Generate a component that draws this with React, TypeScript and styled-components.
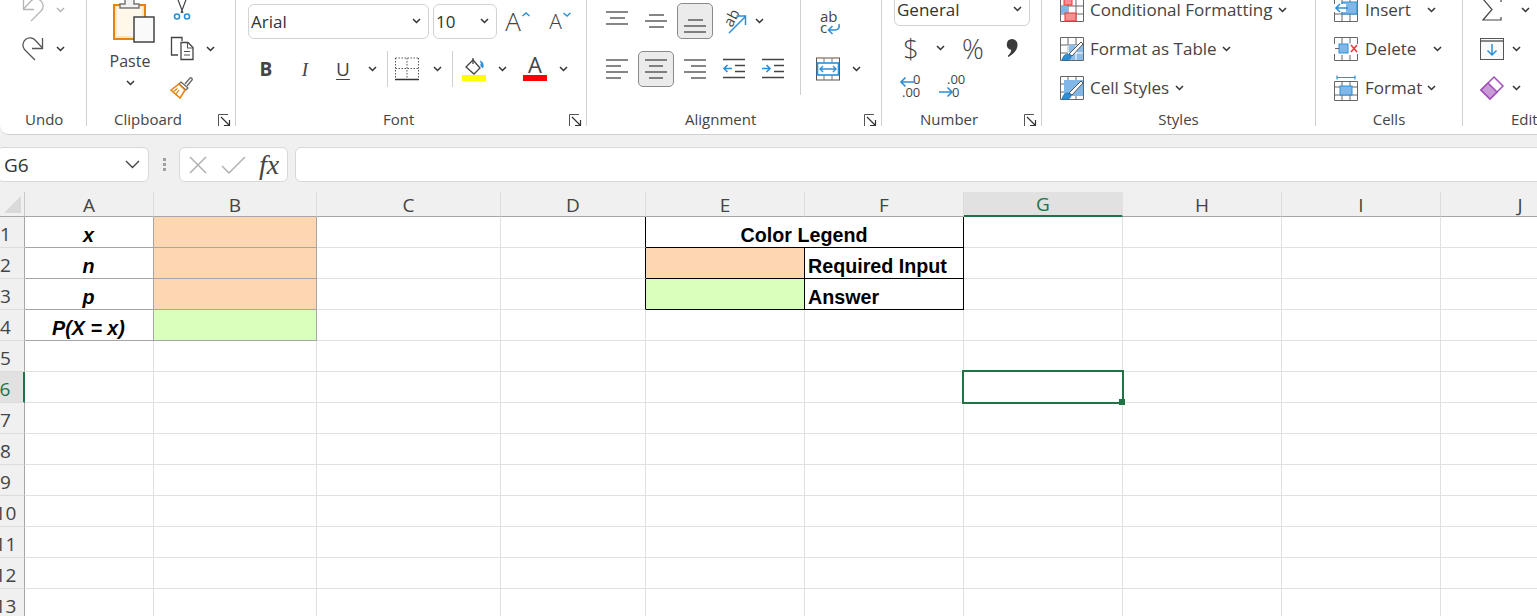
import React from 'react';
import styled, { createGlobalStyle, css } from 'styled-components';

const uiFont = '"Open Sans", "Noto Sans", sans-serif';
const cellFont = '"Liberation Sans", Arial, sans-serif';
const ink = '#444';
const blue = '#2b8fd8';
const excelGreen = '#217346';
const peach = '#fdd6b2';
const lime = '#d9ffbc';

const GlobalStyle = createGlobalStyle`
  html, body { margin: 0; padding: 0; background: #f0f0f0; overflow: hidden; }
  #root { width: 1537px; height: 616px; overflow: hidden; }
  * { box-sizing: border-box; }
`;

const Page = styled.div`
  width: 1537px;
  height: 616px;
  overflow: hidden;
  background: #f0f0f0;
  font-family: ${uiFont};
`;

/* ---------- ribbon ---------- */

const Ribbon = styled.div`
  display: flex;
  height: 135px;
  background: #fff;
  border-bottom: 1px solid #d0d0d0;
  border-bottom-left-radius: 9px;
  overflow: hidden;
`;

const Group = styled.section<{ $w: number; $last?: boolean }>`
  position: relative;
  flex: none;
  display: flex;
  flex-direction: column;
  width: ${(p) => p.$w}px;
  height: 126px;
  border-right: ${(p) => (p.$last ? 'none' : '1px solid #d0d0d0')};
`;

const GroupBody = styled.div<{ $pl?: number }>`
  flex: none;
  display: flex;
  height: 109px;
  padding-left: ${(p) => p.$pl ?? 0}px;
`;

const GroupLabel = styled.div<{ $x?: number }>`
  flex: none;
  height: 21px;
  font-size: 15px;
  line-height: 21px;
  color: #444;
  text-align: center;
  white-space: nowrap;
  ${(p) =>
    p.$x !== undefined &&
    css`
      text-align: left;
      padding-left: ${p.$x}px;
    `}
`;

const Launcher = styled.span`
  position: absolute;
  right: 5px;
  bottom: 0;
  width: 12px;
  height: 12px;
`;

const Stack = styled.div<{ $mt?: number }>`
  display: flex;
  flex-direction: column;
  margin-top: ${(p) => p.$mt ?? -10}px;
`;

const StackRow = styled.div`
  display: flex;
  align-items: center;
  height: 39px;
  flex: none;
`;

const Rows = styled.div<{ $w?: number; $pl?: number }>`
  display: flex;
  flex-direction: column;
  gap: 12px;
  padding: 3px 0 0 ${(p) => p.$pl ?? 0}px;
  ${(p) => p.$w && `width: ${p.$w}px;`}
`;

const ToolRow = styled.div<{ $gap?: number; $mt?: number }>`
  display: flex;
  align-items: center;
  flex: none;
  height: 36px;
  gap: ${(p) => p.$gap ?? 0}px;
  margin-top: ${(p) => p.$mt ?? 0}px;
`;

const Tool = styled.span<{ $w: number; $active?: boolean; $pl?: number; $ml?: number }>`
  flex: none;
  display: flex;
  align-items: center;
  justify-content: center;
  width: ${(p) => p.$w}px;
  height: 36px;
  margin-left: ${(p) => p.$ml ?? 0}px;
  padding-left: ${(p) => p.$pl ?? 0}px;
  color: ${ink};
  border-radius: 5px;
  ${(p) =>
    p.$active &&
    css`
      background: #ebebeb;
      border: 1px solid #8a8a8a;
    `}
`;

const Divider = styled.span<{ $l: number; $r: number }>`
  flex: none;
  width: 1px;
  height: 36px;
  margin: 0 ${(p) => p.$r}px 0 ${(p) => p.$l}px;
  background: #d0d0d0;
`;

const TallDivider = styled.span`
  flex: none;
  width: 1px;
  height: 95px;
  background: #d0d0d0;
`;

const Combo = styled.div<{ $w: number; $h?: number; $ml?: number }>`
  flex: none;
  display: flex;
  align-items: center;
  justify-content: space-between;
  width: ${(p) => p.$w}px;
  height: ${(p) => p.$h ?? 35}px;
  margin-left: ${(p) => p.$ml ?? 0}px;
  padding: 0 7px 0 2px;
  background: #fff;
  border: 1px solid #d2d2d2;
  border-radius: 6px;
  font-size: 17px;
  color: #333;
`;

const Glyph = styled.span<{
  $size: number;
  $weight?: number;
  $italic?: boolean;
  $serif?: boolean;
  $underline?: boolean;
}>`
  font-family: ${(p) => (p.$serif ? '"Liberation Serif", serif' : uiFont)};
  font-size: ${(p) => p.$size}px;
  font-weight: ${(p) => p.$weight ?? 400};
  font-style: ${(p) => (p.$italic ? 'italic' : 'normal')};
  line-height: 1;
  color: ${ink};
  ${(p) =>
    p.$underline &&
    css`
      text-decoration: underline;
      text-underline-offset: 3px;
    `}
`;

const PasteColumn = styled.div`
  flex: none;
  display: flex;
  flex-direction: column;
  align-items: center;
  width: 60px;
`;

const PasteIconSlot = styled.span`
  display: flex;
  margin-left: 7px;
`;

const PasteText = styled.span`
  height: 22px;
  margin-top: 6px;
  font-size: 16px;
  line-height: 22px;
  color: #444;
`;

const PasteChevron = styled.span`
  display: flex;
  margin-top: 8px;
`;

const StyleItem = styled.div`
  display: flex;
  align-items: center;
  height: 39px;
  flex: none;
`;

const StyleText = styled.span<{ $ml?: number }>`
  margin-left: ${(p) => p.$ml ?? 6}px;
  font-size: 17px;
  color: #444;
  white-space: nowrap;
`;

const ChevronSlot = styled.span<{ $ml: number }>`
  display: flex;
  margin-left: ${(p) => p.$ml}px;
`;

const Svg = styled.svg<{ $flip?: boolean; $ml?: number }>`
  display: block;
  flex: none;
  overflow: visible;
  margin-left: ${(p) => p.$ml ?? 0}px;
  ${(p) => p.$flip && 'transform: scaleX(-1);'}
`;

const CaretSvg = styled(Svg)`
  margin-bottom: 14px;
  margin-left: 1px;
`;

const Chevron: React.FC<{ color?: string; w?: number }> = ({ color = '#333', w = 9 }) => (
  <Svg width={w} height={6} viewBox="0 0 9 6">
    <path d="M1 1l3.5 3.5L8 1" fill="none" stroke={color} strokeWidth="1.5" />
  </Svg>
);

const LauncherIcon = () => (
  <Launcher>
    <Svg width={12} height={12} viewBox="0 0 12 12">
      <path d="M.5 12V.5H10" fill="none" stroke="#555" />
      <path d="M3 3l8 8M11.5 6v5.500H6" fill="none" stroke="#333" strokeWidth="1.200" />
    </Svg>
  </Launcher>
);

const RedoIcon: React.FC<{ color?: string; flip?: boolean }> = ({ color = '#555', flip }) => (
  <Svg width={24} height={24} viewBox="0 0 24 24" $flip={flip}>
    <path d="M14 23L3.500 12.500a6.800 6.800 0 0 1 11-9L21 10.500" fill="none" stroke={color} strokeWidth="1.300" />
    <path d="M21.500 1v10.500H11" fill="none" stroke={color} strokeWidth="1.300" />
  </Svg>
);

const PasteIcon = () => (
  <Svg width={42} height={44} viewBox="0 0 42 44">
    <rect x="1" y="5" width="31" height="34" fill="#fbe6bd" stroke="#e8820c" strokeWidth="2" />
    <rect x="4" y="7" width="25" height="29" fill="#fff8e8" />
    <path d="M7 8V4h5V-2h9v6h5v4z" fill="#f2f2f2" stroke="#777" strokeWidth="1.500" />
    <rect x="21" y="17" width="20" height="25" fill="#fafafa" stroke="#444" strokeWidth="1.500" />
  </Svg>
);

const ScissorsIcon = () => (
  <Svg width={20} height={24} viewBox="0 0 20 24">
    <path d="M5-1l6 16M15-1L9 15" fill="none" stroke="#444" strokeWidth="1.200" />
    <circle cx="5" cy="18.500" r="2.500" fill="none" stroke={blue} strokeWidth="1.600" />
    <circle cx="15" cy="18.500" r="2.500" fill="none" stroke={blue} strokeWidth="1.600" />
  </Svg>
);

const CopyIcon = () => (
  <Svg width={25} height={25} viewBox="0 0 25 25">
    <path d="M8 19H1.500V1.500H12V5" fill="none" stroke="#444" strokeWidth="1.300" />
    <path d="M11 6.500h7l5 5V23.500H11z" fill="#fff" stroke="#444" strokeWidth="1.300" />
    <path d="M17.500 6.500v5.500H23M14 15.500h6M14 19h6" fill="none" stroke="#555" strokeWidth="1.100" />
  </Svg>
);

const BrushIcon = () => (
  <Svg width={24} height={24} viewBox="0 0 24 24">
    <path d="M15 8l5-6c1-1 3 1 2 2l-5 6" fill="#fff" stroke="#666" strokeWidth="1.300" />
    <path d="M11 6l7 6-2 2-7-6z" fill="#fff" stroke="#666" strokeWidth="1.200" />
    <path d="M1 14l8-6 6 6-5 8z" fill="#fff" stroke="#e8820c" strokeWidth="1.500" />
    <path d="M5.500 19l3.500-5M3.500 15.500l4-3" stroke="#e8820c" strokeWidth="1.200" />
  </Svg>
);

const BordersIcon = () => (
  <Svg width={24} height={24} viewBox="0 0 24 24">
    <path d="M.5 1h23M.5 11.500h23M.5 1v21M12 1v21M23.500 1v21" fill="none" stroke="#555" strokeWidth="1" strokeDasharray="1.500 1.500" />
    <path d="M0 22.500h24" stroke="#333" strokeWidth="1.500" />
  </Svg>
);

const FillIcon = () => (
  <Svg width={24} height={24} viewBox="0 0 24 24">
    <path d="M4 10l7-7 7 8-6 6z" fill="#fff" stroke="#444" strokeWidth="1.300" />
    <path d="M11 1v6" stroke="#444" strokeWidth="1.300" />
    <path d="M18 4c3 1 3.500 3.500 3 6.500-1.500 0-2.500-1.500-2-3.500" fill={blue} stroke={blue} />
    <rect y="18" width="24" height="6" fill="#ffff00" />
  </Svg>
);

const FontColorIcon = () => (
  <Svg width={24} height={24} viewBox="0 0 24 24">
    <text x="12" y="16" textAnchor="middle" fontFamily={uiFont} fontSize="22" fill="#444">A</text>
    <rect y="18" width="24" height="6" fill="#ff0000" />
  </Svg>
);

const GrowCaret: React.FC<{ down?: boolean }> = ({ down }) => (
  <CaretSvg width={8} height={5} viewBox="0 0 8 5">
    <path d={down ? 'M.5 1L4 4l3.500-3' : 'M.5 4L4 1l3.500 3'} fill="none" stroke={blue} strokeWidth="1.500" />
  </CaretSvg>
);

type Line = [number, number, number];

const LinesIcon: React.FC<{ lines: Line[] }> = ({ lines }) => (
  <Svg width={24} height={24} viewBox="0 0 24 24">
    {lines.map(([a, b, y]) => (
      <path key={`${a}-${y}`} d={`M${a} ${y}H${b}`} stroke="#444" strokeWidth="1.300" />
    ))}
  </Svg>
);

const IndentIcon: React.FC<{ out?: boolean }> = ({ out }) => (
  <Svg width={24} height={24} viewBox="0 0 24 24">
    <path d="M1 2.500h22M1 20.500h22M13 8.500h10M13 14.500h10" stroke="#444" strokeWidth="1.300" />
    {out ? (
      <path d="M10 11.500H2M5.500 8L2 11.500 5.500 15" fill="none" stroke={blue} strokeWidth="1.600" />
    ) : (
      <path d="M1 11.500h8M5.500 8L9 11.500 5.500 15" fill="none" stroke={blue} strokeWidth="1.600" />
    )}
  </Svg>
);

const OrientIcon = () => (
  <Svg width={26} height={26} viewBox="0 0 26 26">
    <text x="0" y="0" transform="translate(11 20) rotate(-62)" fontFamily={uiFont} fontSize="15" fill="#444">ab</text>
    <path d="M8 25L24 9M15.500 8H24.500V17" fill="none" stroke={blue} strokeWidth="1.500" />
  </Svg>
);

const WrapIcon = () => (
  <Svg width={24} height={26} viewBox="0 0 24 26">
    <text x="3" y="14" fontFamily={uiFont} fontSize="15" fill="#444">ab</text>
    <text x="3" y="25" fontFamily={uiFont} fontSize="15" fill="#444">c</text>
    <path d="M22 16c1 4-1 6-4 6h-6M15.500 18L11.500 22l4 4" fill="none" stroke={blue} strokeWidth="1.500" />
  </Svg>
);

const MergeIcon = () => (
  <Svg width={24} height={24} viewBox="0 0 24 24">
    <rect x=".5" y="1" width="23" height="22" fill="#fff" stroke="#555" />
    <path d="M8 1v22M16 1v22" stroke="#777" />
    <rect x="1.500" y="6" width="21" height="12" fill="#fff" stroke={blue} strokeWidth="1.600" />
    <path d="M4 12h16M7 9l-3 3 3 3M17 9l3 3-3 3" fill="none" stroke={blue} strokeWidth="1.400" />
  </Svg>
);

const DecimalIcon: React.FC<{ more?: boolean }> = ({ more }) => (
  <Svg width={24} height={26} viewBox="0 0 24 26">
    <text x={more ? 14 : 9} y="11" fontFamily={uiFont} fontSize="13" fill="#444">{more ? '0' : '.00'}</text>
    <text x={more ? 3 : 14} y="24" fontFamily={uiFont} fontSize="13" fill="#444">{more ? '.00' : '0'}</text>
    {more ? (
      <path d="M15 9H2M6.500 4.500L2 9l4.500 4.500" fill="none" stroke={blue} strokeWidth="1.600" />
    ) : (
      <path d="M1 19h13M9.500 14.500L14 19l-4.500 4.500" fill="none" stroke={blue} strokeWidth="1.600" />
    )}
  </Svg>
);

const CommaIcon = () => (
  <Svg width={12} height={18} viewBox="0 0 12 18">
    <path d="M6 0a5.500 5.500 0 0 1 5.500 6c0 5-4 9-9 12l-.8-1c2-2 3.500-4 3.500-6.300A5.400 5.400 0 0 1 6 0z" fill="#3a3a3a" />
  </Svg>
);

const GridLines = () => (
  <path d="M.5.500h23v23H.5zM8 .5v23M16 .5v23M.5 8h23M.5 16h23" fill="none" stroke="#666" />
);

const SheetBrush = () => (
  <>
    <path d="M9 17L21 5l2 2-11 12z" fill="#fff" stroke="#555" />
    <path d="M2 23c1-3 2-6 6-6l3 2c0 4-4 5-9 4z" fill={blue} stroke="#1b6fae" strokeWidth=".8" />
  </>
);

const ConditionalIcon = () => (
  <Svg width={24} height={24} viewBox="0 0 24 24">
    <GridLines />
    <rect x="4" y="-2" width="8" height="9" fill="#f58f90" stroke="#e33" />
    <rect x="1" y="8" width="7" height="8" fill="#7fb8e8" />
    <rect x="5" y="15" width="11" height="8" fill="#f58f90" stroke="#e33" />
  </Svg>
);

const TableIcon = () => (
  <Svg width={24} height={24} viewBox="0 0 24 24">
    <GridLines />
    <rect x="8" y="8" width="15" height="15" fill="#8bbdea" />
    <path d="M8 8v15M16 8v15M8 16h15" stroke="#fff" />
    <SheetBrush />
  </Svg>
);

const CellStylesIcon = () => (
  <Svg width={24} height={24} viewBox="0 0 24 24">
    <GridLines />
    <rect x="4" y="4" width="19" height="16" fill="#7fb8e8" />
    <SheetBrush />
  </Svg>
);

const InsertIcon = () => (
  <Svg width={24} height={24} viewBox="0 0 24 24">
    <GridLines />
    <rect x="8" y="4" width="15" height="12" fill="#7fb8e8" stroke={blue} />
    <rect x="0" y="6" width="12" height="8" fill="#fff" />
    <path d="M14 10H2M6 6l-4 4 4 4" fill="none" stroke={blue} strokeWidth="1.600" />
  </Svg>
);

const DeleteIcon = () => (
  <Svg width={24} height={24} viewBox="0 0 24 24">
    <path d="M.5 7V.5h23V7M.5 17v6.500h23V17M8 .5v6M16 .5v6M8 18v5M16 18v5" fill="none" stroke="#666" />
    <rect x="5" y="7" width="9" height="9" fill="#7fb8e8" stroke={blue} />
    <path d="M1 11.500h4" stroke="#666" />
    <path d="M17 8l6 7M23 8l-6 7" stroke="#f03a3a" strokeWidth="1.600" />
  </Svg>
);

const FormatIcon = () => (
  <Svg width={24} height={26} viewBox="0 0 24 26">
    <path d="M.5 6.500h23v19H.5zM8 6.500v19M16 6.500v19M.5 12h23M.5 20h23" fill="none" stroke="#666" />
    <rect x="6" y="11" width="12" height="9" fill="#7fb8e8" stroke={blue} />
    <path d="M3 2.500h18M3 .5v4M21 .5v4" fill="none" stroke={blue} strokeWidth="1.200" />
  </Svg>
);

const SigmaIcon = () => (
  <Svg width={20} height={24} viewBox="0 0 20 24">
    <path d="M19 4V1H1l9 10.500L1 22h18v-3" fill="none" stroke="#444" strokeWidth="1.200" />
  </Svg>
);

const FillDownIcon = () => (
  <Svg width={24} height={22} viewBox="0 0 24 22">
    <rect x=".5" y=".5" width="23" height="21" fill="#fafafa" stroke="#555" />
    <path d="M.5 3h23" stroke="#555" strokeWidth="1.400" />
    <path d="M12 6v11M7.500 12.500L12 17l4.500-4.500" fill="none" stroke={blue} strokeWidth="1.500" />
  </Svg>
);

const EraserIcon = () => (
  <Svg width={24} height={24} viewBox="0 0 24 24">
    <path d="M1 14L14 1l9 9-13 13z" fill="#fff" stroke="#a34dbb" strokeWidth="1.500" />
    <path d="M1 14l7-7 9 9-7 7z" fill="#c99bd6" stroke="#a34dbb" strokeWidth="1.500" />
  </Svg>
);

const styleItems = [
  { icon: <ConditionalIcon />, label: 'Conditional Formatting', gap: 6 },
  { icon: <TableIcon />, label: 'Format as Table', gap: 5 },
  { icon: <CellStylesIcon />, label: 'Cell Styles', gap: 6 },
];

const cellItems = [
  { icon: <InsertIcon />, label: 'Insert', gap: 16 },
  { icon: <DeleteIcon />, label: 'Delete', gap: 17 },
  { icon: <FormatIcon />, label: 'Format', gap: 5 },
];

const editItems = [
  { icon: <SigmaIcon />, gap: 9 },
  { icon: <FillDownIcon />, gap: 0 },
  { icon: <EraserIcon />, gap: 0 },
];

const RibbonBar = () => (
  <Ribbon>
    <Group $w={87}>
      <GroupBody $pl={15}>
        <Stack>
          <StackRow>
            <Tool $w={36}><RedoIcon color="#b5b5b5" flip /></Tool>
            <ChevronSlot $ml={5}><Chevron color="#b5b5b5" /></ChevronSlot>
          </StackRow>
          <StackRow>
            <Tool $w={36}><RedoIcon /></Tool>
            <ChevronSlot $ml={5}><Chevron /></ChevronSlot>
          </StackRow>
        </Stack>
      </GroupBody>
      <GroupLabel $x={25}>Undo</GroupLabel>
    </Group>

    <Group $w={149}>
      <GroupBody $pl={13}>
        <PasteColumn>
          <PasteIconSlot><PasteIcon /></PasteIconSlot>
          <PasteText>Paste</PasteText>
          <PasteChevron><Chevron /></PasteChevron>
        </PasteColumn>
        <Stack>
          <StackRow><Tool $w={44}><ScissorsIcon /></Tool></StackRow>
          <StackRow>
            <Tool $w={44}><CopyIcon /></Tool>
            <ChevronSlot $ml={2}><Chevron /></ChevronSlot>
          </StackRow>
          <StackRow><Tool $w={44}><BrushIcon /></Tool></StackRow>
        </Stack>
      </GroupBody>
      <GroupLabel $x={27}>Clipboard</GroupLabel>
      <LauncherIcon />
    </Group>

    <Group $w={351}>
      <GroupBody $pl={12}>
        <Rows>
          <ToolRow>
            <Combo $w={181}>Arial<Chevron /></Combo>
            <Combo $w={64} $ml={4}>10<Chevron /></Combo>
            <Tool $w={41}><Glyph $size={26} $weight={300}>A</Glyph><GrowCaret /></Tool>
            <Tool $w={41} $pl={3}><Glyph $size={21} $weight={300}>A</Glyph><GrowCaret down /></Tool>
          </ToolRow>
          <ToolRow>
            <Tool $w={36}><Glyph $size={19} $weight={700}>B</Glyph></Tool>
            <Tool $w={42}><Glyph $size={19} $italic $serif>I</Glyph></Tool>
            <Tool $w={34}><Glyph $size={19} $underline>U</Glyph></Tool>
            <Tool $w={24}><Chevron /></Tool>
            <Divider $l={3} $r={2} />
            <Tool $w={34}><BordersIcon /></Tool>
            <Tool $w={26}><Chevron /></Tool>
            <Divider $l={2} $r={5} />
            <Tool $w={32}><FillIcon /></Tool>
            <Tool $w={24}><Chevron /></Tool>
            <Tool $w={42}><FontColorIcon /></Tool>
            <Tool $w={14}><Chevron /></Tool>
          </ToolRow>
        </Rows>
      </GroupBody>
      <GroupLabel $x={147}>Font</GroupLabel>
      <LauncherIcon />
    </Group>

    <Group $w={295}>
      <GroupBody>
        <Rows $w={213} $pl={12}>
          <ToolRow $gap={3}>
            <Tool $w={36}><LinesIcon lines={[[1, 23, 3], [5, 20, 9], [1, 23, 15]]} /></Tool>
            <Tool $w={36}><LinesIcon lines={[[5, 20, 6], [1, 23, 12], [5, 20, 18]]} /></Tool>
            <Tool $w={36} $active><LinesIcon lines={[[5, 20, 11], [1, 23, 17], [1, 23, 23]]} /></Tool>
            <Tool $w={36}><OrientIcon /></Tool>
            <Tool $w={8}><Chevron /></Tool>
          </ToolRow>
          <ToolRow $gap={3}>
            <Tool $w={36}><LinesIcon lines={[[1, 23, 3], [1, 16, 9], [1, 23, 15], [1, 16, 21]]} /></Tool>
            <Tool $w={36} $active><LinesIcon lines={[[1, 23, 3], [5, 19, 9], [1, 23, 15], [5, 19, 21]]} /></Tool>
            <Tool $w={36}><LinesIcon lines={[[1, 23, 3], [8, 23, 9], [1, 23, 15], [8, 23, 21]]} /></Tool>
            <Tool $w={36}><IndentIcon out /></Tool>
            <Tool $w={36}><IndentIcon /></Tool>
          </ToolRow>
        </Rows>
        <TallDivider />
        <Rows $pl={10}>
          <ToolRow><Tool $w={36}><WrapIcon /></Tool></ToolRow>
          <ToolRow>
            <Tool $w={34}><MergeIcon /></Tool>
            <Tool $w={22}><Chevron /></Tool>
          </ToolRow>
        </Rows>
      </GroupBody>
      <GroupLabel $x={98}>Alignment</GroupLabel>
      <LauncherIcon />
    </Group>

    <Group $w={160}>
      <GroupBody $pl={12}>
        <Stack $mt={-8}>
          <Combo $w={136} $h={34}>General<Chevron /></Combo>
          <ToolRow $mt={4}>
            <Tool $w={34}><Glyph $size={27} $weight={300}>$</Glyph></Tool>
            <Tool $w={24}><Chevron /></Tool>
            <Tool $w={42}><Glyph $size={27} $weight={300}>%</Glyph></Tool>
            <Tool $w={36}><CommaIcon /></Tool>
          </ToolRow>
          <ToolRow $mt={2}>
            <Tool $w={34}><DecimalIcon more /></Tool>
            <Tool $w={34} $ml={5}><DecimalIcon /></Tool>
          </ToolRow>
        </Stack>
      </GroupBody>
      <GroupLabel $x={38}>Number</GroupLabel>
      <LauncherIcon />
    </Group>

    <Group $w={274}>
      <GroupBody $pl={18}>
        <Stack>
          {styleItems.map((item) => (
            <StyleItem key={item.label}>
              {item.icon}
              <StyleText>{item.label}</StyleText>
              <ChevronSlot $ml={item.gap}><Chevron /></ChevronSlot>
            </StyleItem>
          ))}
        </Stack>
      </GroupBody>
      <GroupLabel>Styles</GroupLabel>
    </Group>

    <Group $w={147}>
      <GroupBody $pl={18}>
        <Stack>
          {cellItems.map((item) => (
            <StyleItem key={item.label}>
              {item.icon}
              <StyleText $ml={7}>{item.label}</StyleText>
              <ChevronSlot $ml={item.gap}><Chevron /></ChevronSlot>
            </StyleItem>
          ))}
        </Stack>
      </GroupBody>
      <GroupLabel>Cells</GroupLabel>
    </Group>

    <Group $w={100} $last>
      <GroupBody $pl={9}>
        <Stack>
          {editItems.map((item, i) => (
            <StyleItem key={i}>
              <Tool $w={40}>{item.icon}</Tool>
              <ChevronSlot $ml={item.gap}><Chevron /></ChevronSlot>
            </StyleItem>
          ))}
        </Stack>
      </GroupBody>
      <GroupLabel $x={48}>Editing</GroupLabel>
    </Group>
  </Ribbon>
);

/* ---------- formula bar ---------- */

const FormulaBar = styled.div`
  display: flex;
  align-items: center;
  height: 35px;
  margin: 12px 0 10px;
`;

const NameBox = styled.div`
  flex: none;
  display: flex;
  align-items: center;
  justify-content: space-between;
  width: 152px;
  height: 35px;
  margin-left: -3px;
  padding: 0 8px 0 6px;
  background: #fff;
  border: 1px solid #d8d8d8;
  border-radius: 6px;
  font-size: 19px;
  color: #333;
`;

const Grip = styled.span`
  flex: none;
  display: flex;
  flex-direction: column;
  gap: 2px;
  width: 4px;
  margin: 0 12px 0 14px;
`;

const GripDot = styled.i`
  display: block;
  width: 3px;
  height: 3px;
  background: #a0a0a0;
`;

const FxBox = styled.div`
  flex: none;
  display: flex;
  align-items: center;
  width: 109px;
  height: 35px;
  padding-left: 8px;
  background: #fff;
  border: 1px solid #d8d8d8;
  border-radius: 6px;
`;

const FxText = styled.span`
  margin-left: 13px;
  font-family: "Liberation Serif", serif;
  font-size: 28px;
  line-height: 1;
  font-style: italic;
  color: #444;
`;

const FormulaInput = styled.div`
  flex: 1;
  height: 35px;
  margin-left: 7px;
  margin-right: -8px;
  background: #fff;
  border: 1px solid #d8d8d8;
  border-radius: 6px;
`;

/* ---------- sheet ---------- */

const columns = [
  { label: 'A', w: 129 },
  { label: 'B', w: 163 },
  { label: 'C', w: 184 },
  { label: 'D', w: 145 },
  { label: 'E', w: 159 },
  { label: 'F', w: 159 },
  { label: 'G', w: 159 },
  { label: 'H', w: 159 },
  { label: 'I', w: 159 },
  { label: 'J', w: 159 },
];

const Sheet = styled.div`
  display: grid;
  grid-template-columns: 25px ${columns.map((c) => `${c.w}px`).join(' ')};
  grid-template-rows: 25px repeat(13, 31px);
  width: 1600px;
  background: #fff;
`;

const Corner = styled.div`
  position: relative;
  background: #f0f0f0;
  border-right: 1px solid #c8c8c8;
  border-bottom: 1px solid #a6a6a6;

  &::after {
    content: '';
    position: absolute;
    left: 4px;
    bottom: 3px;
    width: 17px;
    height: 17px;
    background: #d9d9d9;
    clip-path: polygon(100% 0, 100% 100%, 0 100%);
  }
`;

const ColHead = styled.div<{ $selected?: boolean }>`
  display: flex;
  align-items: center;
  justify-content: center;
  padding-top: 2px;
  font-size: 19px;
  line-height: 1;
  color: ${(p) => (p.$selected ? excelGreen : ink)};
  background: ${(p) => (p.$selected ? '#e1e1e1' : '#f0f0f0')};
  border-right: 1px solid ${(p) => (p.$selected ? '#e1e1e1' : '#dcdcdc')};
  border-bottom: ${(p) => (p.$selected ? `2px solid ${excelGreen}` : '1px solid #a6a6a6')};
`;

const RowHead = styled.div<{ $selected?: boolean }>`
  display: flex;
  align-items: center;
  justify-content: center;
  padding: 5px 13px 0 0;
  overflow: hidden;
  font-size: 19px;
  line-height: 1;
  white-space: nowrap;
  color: ${(p) => (p.$selected ? excelGreen : ink)};
  background: ${(p) => (p.$selected ? '#e1e1e1' : '#f0f0f0')};
  border-right: ${(p) => (p.$selected ? `2px solid ${excelGreen}` : '1px solid #a6a6a6')};
  border-bottom: 1px solid #dcdcdc;
`;

const Cell = styled.div<{
  $fill?: string;
  $right?: string;
  $bottom?: string;
  $span?: number;
  $align?: string;
  $italic?: boolean;
}>`
  position: relative;
  display: flex;
  align-items: flex-end;
  justify-content: ${(p) => p.$align ?? 'flex-start'};
  padding: ${(p) => (p.$align ? '0 1px 0 0' : '0 0 0 3px')};
  grid-column: span ${(p) => p.$span ?? 1};
  background: ${(p) => p.$fill ?? '#fff'};
  border-right: 1px solid ${(p) => p.$right ?? '#e1e1e1'};
  border-bottom: 1px solid ${(p) => p.$bottom ?? '#e1e1e1'};
  font-family: ${cellFont};
  font-size: 19.7px;
  line-height: 24px;
  font-weight: 700;
  font-style: ${(p) => (p.$italic ? 'italic' : 'normal')};
  color: #000;
  white-space: nowrap;
`;

const Selection = styled.div`
  position: absolute;
  z-index: 2;
  top: -2px;
  left: -2px;
  right: -2px;
  bottom: -2px;
  border: 2px solid ${excelGreen};
  pointer-events: none;

  &::after {
    content: '';
    position: absolute;
    right: -3px;
    bottom: -3px;
    width: 6px;
    height: 6px;
    background: ${excelGreen};
  }
`;

const tableGrey = '#a6a6a6';
const black = '#000';

const cellProps = (row: number, col: string) => {
  const inTable = row <= 4;
  const inLegend = row <= 3;
  const props: React.ComponentProps<typeof Cell> = {};
  if (inTable && col === 'A') {
    props.$right = tableGrey;
    props.$bottom = tableGrey;
    props.$align = 'center';
    props.$italic = true;
  }
  if (inTable && col === 'B') {
    props.$right = tableGrey;
    props.$bottom = tableGrey;
    props.$fill = row === 4 ? lime : peach;
  }
  if (inLegend && col === 'D') props.$right = black;
  if (inLegend && (col === 'E' || col === 'F')) {
    props.$right = black;
    props.$bottom = black;
  }
  if (inLegend && col === 'E' && row > 1) props.$fill = row === 2 ? peach : lime;
  return props;
};

const cellText: Record<string, string> = {
  A1: 'x',
  A2: 'n',
  A3: 'p',
  A4: 'P(X = x)',
  F2: 'Required Input',
  F3: 'Answer',
};

const rowNumbers = Array.from({ length: 13 }, (_, i) => i + 1);

const Worksheet = () => (
  <Sheet>
    <Corner />
    {columns.map((c) => (
      <ColHead key={c.label} $selected={c.label === 'G'}>{c.label}</ColHead>
    ))}
    {rowNumbers.map((row) => (
      <React.Fragment key={row}>
        <RowHead $selected={row === 6}>{row}</RowHead>
        {columns.map(({ label }) => {
          if (row === 1 && label === 'F') return null;
          if (row === 1 && label === 'E') {
            return (
              <Cell key={label} {...cellProps(row, label)} $span={2} $align="center">
                Color Legend
              </Cell>
            );
          }
          return (
            <Cell key={label} {...cellProps(row, label)}>
              {cellText[`${label}${row}`]}
              {row === 6 && label === 'G' && <Selection />}
            </Cell>
          );
        })}
      </React.Fragment>
    ))}
  </Sheet>
);

export default function App() {
  return (
    <Page>
      <GlobalStyle />
      <RibbonBar />
      <FormulaBar>
        <NameBox>
          G6
          <Svg width={15} height={9} viewBox="0 0 15 9">
            <path d="M1 1l6.500 6.500L14 1" fill="none" stroke="#444" strokeWidth="1.400" />
          </Svg>
        </NameBox>
        <Grip><GripDot /><GripDot /><GripDot /></Grip>
        <FxBox>
          <Svg width={20} height={20} viewBox="0 0 20 20">
            <path d="M2 2l16 16M18 2L2 18" stroke="#b0b0b0" strokeWidth="1.500" />
          </Svg>
          <Svg width={25} height={20} viewBox="0 0 25 20" $ml={13}>
            <path d="M1 11l7 7L24 2" fill="none" stroke="#b0b0b0" strokeWidth="1.500" />
          </Svg>
          <FxText>fx</FxText>
        </FxBox>
        <FormulaInput />
      </FormulaBar>
      <Worksheet />
    </Page>
  );
}
